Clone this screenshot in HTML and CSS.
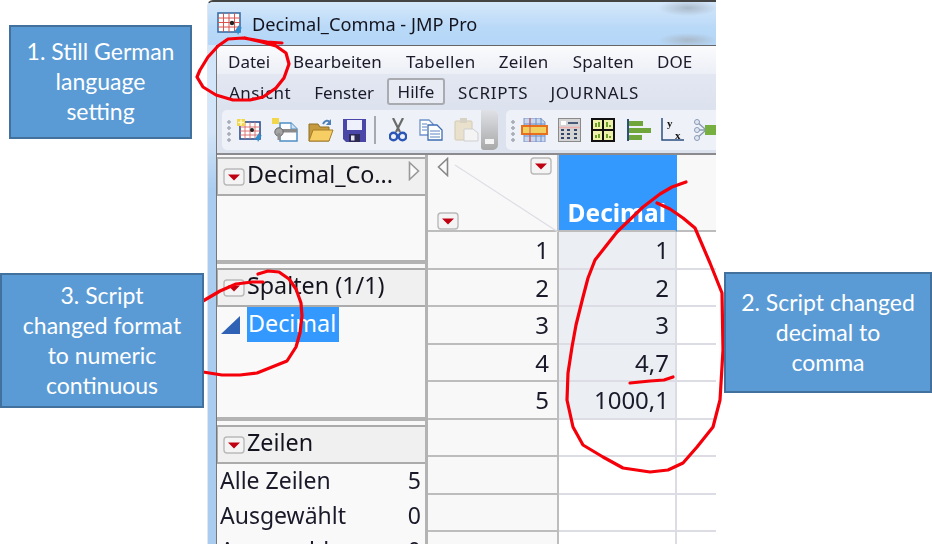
FILE: index.html
```html
<!DOCTYPE html>
<html lang="en">
<head>
    <meta charset="UTF-8">
    <title>Decimal_Comma - JMP Pro</title>
    <link rel="stylesheet" href="styles.css">
</head>
<body>
    <svg width="0" height="0" class="defs">
        <symbol id="red-btn" viewBox="0 0 22 18">
            <rect x="1" y="1" width="20" height="16" rx="3" fill="#f5f4f4" stroke="#b9b9b9" stroke-width="1.4"/>
            <path d="M5 6.5h12l-6 6z" fill="#c00010"/>
        </symbol>
    </svg>

    <div class="window">
        <div class="titlebar">
            <svg class="app-icon" width="25" height="23" viewBox="0 0 25 23">
                <rect x="1" y="1" width="22" height="19" fill="#fff" stroke="#3a6ea5" stroke-width="1.6"/>
                <path d="M1 6h22M1 10.500h22M1 15h22M6.500 1v19M12 1v19M17.500 1v19" stroke="#d9534f" stroke-width="1"/>
                <circle cx="15" cy="11" r="2.200" fill="#222"/>
                <path d="M17 20l5-7 1 3 2-1-4 8-1-3z" fill="#2c8fd0"/>
            </svg>
            <span class="title-text">Decimal_Comma - JMP Pro</span>
        </div>

        <div class="frame">
            <div class="menu-row menu-top">
                <span class="m-datei">Datei</span>
                <span class="m-bearb">Bearbeiten</span>
                <span class="m-tab">Tabellen</span>
                <span class="m-zeil">Zeilen</span>
                <span class="m-spal">Spalten</span>
                <span>DOE</span>
            </div>
            <div class="menu-row menu-bottom">
                <span class="m-ans">Ansicht</span>
                <span class="m-fen">Fenster</span>
                <span class="m-hilfe">Hilfe</span>
                <span class="m-scr">SCRIPTS</span>
                <span class="m-jour">JOURNALS</span>
            </div>

            <div class="toolbar">
                <div class="tool-group first">
                    <span class="grip"></span>
                    <svg class="ico i-new" width="25" height="23" viewBox="0 0 25 23">
                        <rect x="3" y="3" width="20" height="17" fill="#fff" stroke="#2b4f8f" stroke-width="1.600"/>
                        <path d="M3 8h20M3 12h20M3 16h20M8 3v17M13 3v17M18 3v17" stroke="#d86a6a" stroke-width=".9"/>
                        <circle cx="15" cy="11" r="2" fill="#222"/>
                        <path d="M0 0h8v7H0z" fill="#f2d64b"/>
                        <path d="M1 3.500h6M4 .5v6" stroke="#fff8c0" stroke-width="1.500"/>
                        <path d="M17 21l5-7 1 3 2-1-4 7-1-3z" fill="#2c8fd0"/>
                    </svg>
                    <svg class="ico i-tpl" width="27" height="24" viewBox="0 0 27 24">
                        <path d="M8 5h11l6 6v12H8z" fill="#fbfdff" stroke="#4f8ec4" stroke-width="1.500"/>
                        <path d="M19 5v6h6" fill="#cfe3f5" stroke="#4f8ec4"/>
                        <rect x="7" y="11" width="18" height="3.500" fill="#8a8a8a"/>
                        <circle cx="7" cy="14" r="4.200" fill="#a5a5a5" stroke="#666"/>
                        <rect x="5.500" y="15" width="3" height="7" fill="#8f8f8f"/>
                        <path d="M0 0h7v6H0z" fill="#f2d64b"/>
                    </svg>
                    <svg class="ico i-open" width="26" height="24" viewBox="0 0 26 24">
                        <path d="M1 6h9l2 3h9v14H1z" fill="#c59a3c" stroke="#8f6e24"/>
                        <path d="M5 12h20l-4 11H1z" fill="#f6ce64" stroke="#a67d28"/>
                        <path d="M15 6c2-4 5-4 7-2" fill="none" stroke="#4d7fb8" stroke-width="2"/>
                        <path d="M23 1v6h-5z" fill="#4d7fb8"/>
                    </svg>
                    <svg class="ico i-save" width="23" height="24" viewBox="0 0 23 24">
                        <path d="M0 1h23v23H3l-3-3z" fill="#4a47a8"/>
                        <rect x="4" y="2" width="15" height="10" fill="#eef0fb"/>
                        <rect x="6" y="16" width="11" height="8" fill="#2d2b55"/>
                        <rect x="8" y="17.500" width="3.500" height="5" fill="#e6e6ee"/>
                    </svg>
                    <span class="tool-sep"></span>
                    <svg class="ico i-cut" width="18" height="24" viewBox="0 0 18 24">
                        <path d="M4 0l7 14M14 0L7 14" stroke="#6a6a6a" stroke-width="2.200" fill="none"/>
                        <circle cx="4.500" cy="18.500" r="3.700" fill="none" stroke="#2b56b5" stroke-width="2.400"/>
                        <circle cx="13.500" cy="18.500" r="3.700" fill="none" stroke="#2b56b5" stroke-width="2.400"/>
                    </svg>
                    <svg class="ico i-copy" width="24" height="22" viewBox="0 0 24 22">
                        <path d="M1 1h9l4 4v11H1z" fill="#fff" stroke="#6f93c9" stroke-width="1.300"/>
                        <path d="M9 6h9l5 5v10H9z" fill="#fff" stroke="#3e6db5" stroke-width="1.300"/>
                        <path d="M11 12h10M11 15h10M11 18h10M3 5h5M3 8h5M3 11h5" stroke="#5d85c4" stroke-width="1.200"/>
                    </svg>
                    <svg class="ico i-paste" width="25" height="24" viewBox="0 0 25 24">
                        <rect x="1" y="3" width="17" height="19" rx="1" fill="#e9e1cb" stroke="#d3cab0"/>
                        <rect x="6" y="0" width="7" height="5" fill="#d7d2c4"/>
                        <path d="M10 11h9l5 4v8H10z" fill="#f4f4f4" stroke="#cfcfcf"/>
                    </svg>
                    <span class="tool-drop"><i></i></span>
                </div>
                <div class="tool-group second">
                    <span class="grip"></span>
                    <svg class="ico i-table" width="27" height="24" viewBox="0 0 27 24">
                        <path d="M3 0h16l5 4v20H3z" fill="#c8d6ee" stroke="#7f96c6"/>
                        <path d="M3 6h21M3 18h21M9 0v24M15 0v24M20 0v24" stroke="#6f8fc9"/>
                        <rect x="1" y="8" width="25" height="8" fill="#f0d060" stroke="#e8701c" stroke-width="2"/>
                        <path d="M9 0v24" stroke="#d9534f"/>
                    </svg>
                    <svg class="ico i-calc" width="23" height="24" viewBox="0 0 23 24">
                        <rect x=".5" y=".5" width="22" height="23" fill="#d4d4d4" stroke="#8a8a8a"/>
                        <rect x="3" y="3" width="5" height="4" fill="#fff"/>
                        <path d="M10 5h10" stroke="#4a5a7a" stroke-width="2"/>
                        <path d="M1 9.500h21" stroke="#f0b0b0" stroke-width="1.500"/>
                        <path d="M3 12h3M9 12h3M16 12h3M3 16h3M9 16h3M16 16h3M3 20h3M9 20h3M16 20h3" stroke="#34456a" stroke-width="2"/>
                    </svg>
                    <svg class="ico i-quad" width="24" height="24" viewBox="0 0 24 24">
                        <rect width="24" height="24" fill="#111"/>
                        <rect x="2" y="2" width="9" height="9" fill="#eef2a8"/>
                        <rect x="13" y="2" width="9" height="9" fill="#eef2a8"/>
                        <rect x="2" y="13" width="9" height="9" fill="#eef2a8"/>
                        <rect x="13" y="13" width="9" height="9" fill="#eef2a8"/>
                        <path d="M5 9V5M8 9V4M16 9V4M19 9V7M5 20v-3M8 20v-4M16 20v-4M19 20v-2" stroke="#6fa02c" stroke-width="2"/>
                    </svg>
                    <svg class="ico i-bars" width="24" height="22" viewBox="0 0 24 22">
                        <path d="M1 0v22" stroke="#2b4f7f" stroke-width="2"/>
                        <path d="M2 2h14v5H2zM2 9h22v5H2zM2 16h13v5H2z" fill="#6fa53a"/>
                    </svg>
                    <svg class="ico i-yx" width="23" height="24" viewBox="0 0 23 24">
                        <path d="M1 0v22h22" fill="none" stroke="#2b4f7f" stroke-width="1.500"/>
                        <text x="6" y="9" class="yx-label">y</text>
                        <text x="14" y="21" class="yx-label">x</text>
                    </svg>
                    <svg class="ico i-fit" width="22" height="24" viewBox="0 0 22 24">
                        <path d="M3 4l8 7M3 12h8M3 20l8-7" stroke="#8a9bb5" stroke-width="1.500"/>
                        <circle cx="3" cy="4" r="2.500" fill="#dfe6f2" stroke="#8a9bb5"/>
                        <circle cx="3" cy="12" r="2.500" fill="#dfe6f2" stroke="#8a9bb5"/>
                        <circle cx="3" cy="20" r="2.500" fill="#dfe6f2" stroke="#8a9bb5"/>
                        <rect x="11" y="7" width="11" height="10" fill="#77b041"/>
                    </svg>
                </div>
            </div>

            <div class="workspace">
                <div class="sidebar">
                    <div class="panel-head">
                        <svg class="red-btn"><use href="#red-btn"/></svg>
                        <span class="head-text">Decimal_Co...</span>
                        <svg class="head-arrow" width="12" height="20" viewBox="0 0 12 20"><path d="M1.500 1.500L10.500 10 1.500 18.500z" fill="#fafafa" stroke="#999" stroke-width="1.600"/></svg>
                    </div>
                    <div class="panel-body body-one"></div>
                    <div class="sash"></div>

                    <div class="panel-head">
                        <svg class="red-btn"><use href="#red-btn"/></svg>
                        <span class="head-text">Spalten (1/1)</span>
                    </div>
                    <div class="panel-body body-two">
                        <div class="column-row">
                            <svg width="20" height="18" viewBox="0 0 20 18"><path d="M19 0v18H0z" fill="#2f62b5"/></svg>
                            <span class="column-name">Decimal</span>
                        </div>
                    </div>
                    <div class="sash"></div>

                    <div class="panel-head">
                        <svg class="red-btn"><use href="#red-btn"/></svg>
                        <span class="head-text">Zeilen</span>
                    </div>
                    <div class="panel-body body-three">
                        <div class="count-row"><span>Alle Zeilen</span><span>5</span></div>
                        <div class="count-row"><span>Ausgewählt</span><span>0</span></div>
                        <div class="count-row"><span>Ausgeschl</span><span>0</span></div>
                    </div>
                </div>

                <div class="table">
                    <div class="cell corner">
                        <svg class="corner-line" width="130" height="77" viewBox="0 0 130 77"><path d="M27 10L130 77" stroke="#dcdce4" stroke-width="1.200"/></svg>
                        <div class="corner-top">
                            <svg width="12" height="20" viewBox="0 0 12 20"><path d="M10.500 1.500L1.500 10 10.500 18.500z" fill="#fafafa" stroke="#888" stroke-width="1.600"/></svg>
                            <svg class="red-btn"><use href="#red-btn"/></svg>
                        </div>
                        <svg class="red-btn"><use href="#red-btn"/></svg>
                    </div>
                    <div class="cell col-head">Decimal</div>
                    <div class="cell blank-head"></div>

                    <div class="cell row-no">1</div><div class="cell value">1</div><div class="cell"></div>
                    <div class="cell row-no">2</div><div class="cell value">2</div><div class="cell"></div>
                    <div class="cell row-no">3</div><div class="cell value">3</div><div class="cell"></div>
                    <div class="cell row-no">4</div><div class="cell value">4,7</div><div class="cell"></div>
                    <div class="cell row-no">5</div><div class="cell value">1000,1</div><div class="cell"></div>
                    <div class="cell row-no"></div><div class="cell"></div><div class="cell"></div>
                    <div class="cell row-no"></div><div class="cell"></div><div class="cell"></div>
                    <div class="cell row-no"></div><div class="cell"></div><div class="cell"></div>
                    <div class="cell row-no"></div><div class="cell"></div><div class="cell"></div>
                </div>
            </div>
        </div>
    </div>

    <!-- hand drawn marks on top of the screenshot -->
    <svg class="ink" width="932" height="544" viewBox="0 0 932 544">
        <path d="M282 43L267 42 243 38 228 39 218 46 208 57 200 70 197 77 203 87 216 95 233 100 250 100 263 97 276 88 284 78 289 64 286 53 276 46 262 42 245 38"/>
        <path d="M203 301L220 291 236 284 252 282 263 282"/>
        <path d="M258 274L268 271 279 272 289 279 296 289 301 303 302 316 300 333 296 347 287 361 272 367 257 373 240 375 222 375 203 372"/>
        <path d="M686 182L672 187 660 194 643 207 617 232 595 260 588 278 583 297 576 325 572 347 568 373 567 400 573 427 583 445 603 457 623 468 650 472 668 470 683 463 697 447 713 427 720 400 723 350 722 293 710 263 695 228 683 218 670 209 657 203"/>
        <path d="M630 383L650 381 664 380 673 377"/>
    </svg>

    <div class="callout callout-one">1. Still German<br>language<br>setting</div>
    <div class="callout callout-two">2. Script changed<br>decimal to<br>comma</div>
    <div class="callout callout-three">3. Script<br>changed format<br>to numeric<br>continuous</div>
</body>
</html>
```

FILE: styles.css
```css
* {
    box-sizing: border-box;
}
body {
    margin: 0;
    width: 932px;
    height: 544px;
    overflow: hidden;
    position: relative;
    background-color: white;
    font-family: "Noto Sans", "Open Sans", sans-serif;
    color: #1a1a2a;
}
.defs {
    position: absolute;
}

/* window */
.window {
    position: absolute;
    left: 207px;
    top: 0;
    width: 509px;
    height: 544px;
    display: flex;
    flex-direction: column;
    overflow: hidden;
    filter: blur(.35px);
    border-left: 1px solid #dfe6ee;
    border-top: 2px solid #444;
    border-top-left-radius: 6px;
    background: linear-gradient(180deg, #d3e5f8 0, #d3e5f8 130px, #a9ccef 190px);
}
.titlebar {
    height: 43px;
    flex: none;
    display: flex;
    align-items: center;
    gap: 10px;
    padding: 0 0 0 9px;
    background:
        radial-gradient(ellipse 30px 8px at 480px 6px, #a9b9c9, transparent),
        radial-gradient(ellipse 30px 7px at 480px 38px, #a9b9c9, transparent),
        linear-gradient(180deg, #d5e7fa, #b9d9f8 60%, #b5d6f7);
}
.app-icon {
    flex: none;
}
.title-text {
    font-size: 18.200px;
    color: #14141f;
}
.frame {
    flex: 1;
    min-height: 0;
    margin-left: 8px;
    display: flex;
    flex-direction: column;
    border-left: 1px solid #777;
    border-top: 1px solid #666;
}

/* menus */
.menu-row {
    display: flex;
    align-items: center;
    font-size: 17px;
    flex: none;
}
.menu-top {
    height: 28px;
    padding: 3px 0 0 11px;
    background: linear-gradient(180deg, #fbfbfd, #eceff6);
}
.menu-bottom {
    height: 33px;
    padding: 3px 0 0 12px;
    background: linear-gradient(180deg, #e3e7f2, #dde2ef);
}
.m-datei { margin-right: 23px; }
.m-bearb { margin-right: 24px; letter-spacing: .1px; }
.m-tab { margin-right: 23px; letter-spacing: .4px; }
.m-zeil { margin-right: 24px; letter-spacing: .3px; }
.m-spal { margin-right: 23px; letter-spacing: .2px; }
.m-ans { margin-right: 23px; letter-spacing: .5px; }
.m-fen { margin-right: 13px; }
.m-hilfe {
    height: 27px;
    width: 58px;
    display: flex;
    align-items: center;
    justify-content: center;
    margin-top: -1px;
    margin-right: 13px;
    border: 2px solid #a9abb0;
    border-radius: 3px;
    background-color: #e8ebf3;
}
.m-scr { margin-right: 22px; letter-spacing: .7px; }
.m-jour { letter-spacing: .7px; }

/* toolbar */
.toolbar {
    height: 46px;
    flex: none;
    display: flex;
    gap: 8px;
    padding: 3px 0 3px 5px;
    background-color: #dde2ef;
}
.tool-group {
    display: flex;
    align-items: center;
    border-radius: 5px;
    background-color: #eef1f8;
    height: 40px;
}
.first {
    width: 279px;
    padding-left: 5px;
    position: relative;
}
.second {
    flex: 1;
    padding-left: 5px;
    border-radius: 5px 0 0 5px;
}
.grip {
    width: 4px;
    height: 23px;
    flex: none;
    margin-right: 6px;
    background-image: radial-gradient(circle, #a9aeb8 1.500px, transparent 2px);
    background-size: 4px 6px;
}
.ico {
    flex: none;
}
.i-new { margin-right: 10px; }
.i-tpl { margin-right: 9px; }
.i-open { margin-right: 9px; }
.i-save { margin-right: 8px; }
.tool-sep {
    width: 2px;
    height: 28px;
    flex: none;
    margin-right: 13px;
    background-color: #a6a9b2;
}
.i-cut { margin-right: 12px; }
.i-copy { margin-right: 11px; }
.tool-drop {
    position: absolute;
    right: 0;
    top: 0;
    width: 17px;
    height: 40px;
    border-radius: 0 5px 5px 3px;
    background: linear-gradient(180deg, #dfe1e6, #a8a8a8);
}
.tool-drop i {
    position: absolute;
    left: 4px;
    bottom: 6px;
    width: 9px;
    height: 5px;
    background-color: #f4f4f4;
}
.i-table { margin-right: 10px; }
.i-calc { margin-right: 10px; }
.i-quad { margin-right: 12px; }
.i-bars { margin-right: 10px; }
.i-yx { margin-right: 10px; }
.yx-label {
    font-family: "Liberation Serif", serif;
    font-weight: bold;
    font-size: 11px;
    fill: #111;
}

/* side panels */
.workspace {
    flex: 1;
    min-height: 0;
    display: flex;
    border-top: 2px solid #8a8a8f;
}
.sidebar {
    width: 211px;
    flex: none;
    padding-top: 2px;
    overflow: hidden;
    background-color: #f9f9f9;
    border-right: 3px solid #b3b3b3;
}
.panel-head {
    height: 39px;
    display: flex;
    align-items: center;
    padding-left: 5px;
    background-color: #f0f0f0;
    border: 2px solid #ababab;
    border-right-width: 0;
    border-left-width: 1px;
}
.red-btn {
    width: 22px;
    height: 18px;
    flex: none;
}
.head-text {
    margin: -5px 0 0 2px;
    font-size: 23.300px;
    color: #14141f;
}
.head-arrow {
    margin: -11px 5px 0 auto;
}
.panel-body {
    background-color: #f9f9f9;
}
.body-one {
    height: 64px;
}
.body-two {
    height: 110px;
}
.sash {
    height: 4px;
    margin-bottom: 4px;
    background-color: #b3b3b3;
}
.column-row {
    display: flex;
    align-items: center;
    gap: 6px;
    padding-left: 4px;
    height: 35px;
}
.column-name {
    width: 92px;
    height: 35px;
    line-height: 32px;
    padding-left: 1px;
    font-size: 23.300px;
    color: white;
    background-color: #3399ff;
}
.count-row {
    display: flex;
    justify-content: space-between;
    height: 35px;
    line-height: 33px;
    padding: 0 4px 0 3px;
    font-size: 23px;
}

/* data table */
.table {
    flex: 1;
    display: grid;
    grid-template-columns: 131px 118px 1fr;
    grid-template-rows: 77px;
    grid-auto-rows: 37.500px;
    overflow: hidden;
    background-color: white;
}
.cell {
    border-bottom: 2px solid #dcdce4;
    border-right: 2px solid #dcdce4;
    padding-right: 6px;
    text-align: right;
    font-size: 24px;
    line-height: 36px;
}
.cell:nth-child(3n) {
    border-right: 0;
}
.corner {
    position: relative;
    display: flex;
    flex-direction: column;
    justify-content: space-between;
    padding: 2px 5px 0 9px;
    background-color: #f8f8f8;
    border-bottom: 2px solid #bdbdbd;
    border-right: 2px solid #bdbdbd;
}
.corner-line {
    position: absolute;
    left: 0;
    top: 0;
}
.corner-top {
    display: flex;
    justify-content: space-between;
    position: relative;
}
.corner > .red-btn {
    position: relative;
}
.col-head {
    display: flex;
    justify-content: flex-end;
    align-items: flex-end;
    padding-right: 9px;
    line-height: 35px;
    font-size: 24.500px;
    font-weight: bold;
    color: white;
    background-color: #3399ff;
    border-right-color: #3399ff;
    border-bottom-color: #bdbdbd;
}
.blank-head {
    background-color: #f8f8f8;
    border-bottom-color: #bdbdbd;
}
.row-no {
    padding-right: 8px;
    background-color: #f8f8f8;
    border-bottom-color: #bdbdbd;
    border-right-color: #bdbdbd;
}
.value {
    background-color: #ebeef2;
}

/* annotations */
.ink {
    position: absolute;
    left: 0;
    top: 0;
}
.ink path {
    fill: none;
    stroke: #f5000a;
    stroke-width: 3.200;
    stroke-linejoin: round;
    stroke-linecap: round;
}
.callout {
    position: absolute;
    display: flex;
    align-items: center;
    justify-content: center;
    text-align: center;
    padding-bottom: 2px;
    font-family: Lato, "Open Sans", sans-serif;
    font-size: 23px;
    line-height: 30px;
    color: white;
    background-color: #5b9bd5;
    border: 2px solid #41719c;
}
.callout-one {
    left: 9px;
    top: 25px;
    width: 183px;
    height: 114px;
}
.callout-two {
    left: 724px;
    top: 272px;
    width: 208px;
    height: 121px;
}
.callout-three {
    left: 0;
    top: 273px;
    width: 204px;
    height: 135px;
}
```
